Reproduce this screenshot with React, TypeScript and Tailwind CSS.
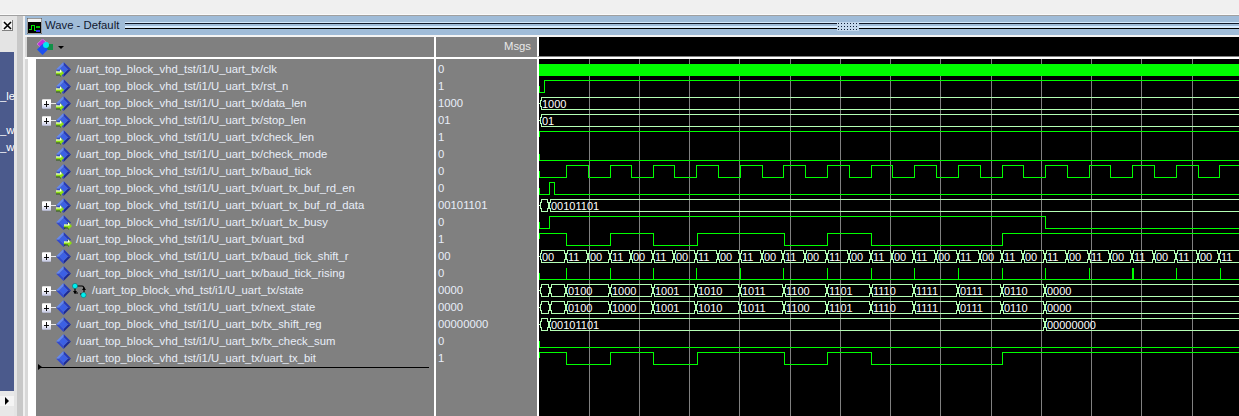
const EDGES = [566, 588, 610, 631, 653, 674, 696, 718, 740, 762, 783, 805, 827, 849, 871, 892, 914, 936, 958, 980, 1002, 1023, 1045, 1067, 1089, 1110, 1132, 1154, 1176, 1198, 1219];
const GRID = [589, 639, 689, 739, 790, 840, 890, 940, 991, 1041, 1091, 1141, 1192];
const RISING = [566, 610, 653, 696, 740, 783, 827, 871, 914, 958, 1002, 1045, 1089, 1132, 1176, 1220];
const STATE_X = [540, 550, 566, 610, 653, 696, 740, 784, 827, 871, 914, 958, 1002, 1045, 1242];
const STATE_LABELS = ["", "", "0100", "1000", "1001", "1010", "1011", "1100", "1101", "1110", "1111", "0111", "0110", "0000"];
const SHIFT_X = [540, ...EDGES, 1242];
const SHIFT_LABELS = SHIFT_X.slice(0, -1).map((_, i) => (i % 2 === 0 ? "00" : "11"));
const TX_EDGES = [566, 610, 653, 697, 784, 827, 871, 1002];

type Sig = { name: string; value: string; plus?: boolean; arrow?: "left" | "right"; fsm?: boolean };

const PREFIX = "/uart_top_block_vhd_tst/i1/U_uart_tx/";
const SIGNALS: Sig[] = [
  { name: "clk", value: "0", arrow: "left" },
  { name: "rst_n", value: "1", arrow: "left" },
  { name: "data_len", value: "1000", arrow: "left", plus: true },
  { name: "stop_len", value: "01", arrow: "left", plus: true },
  { name: "check_len", value: "1", arrow: "left" },
  { name: "check_mode", value: "0", arrow: "left" },
  { name: "baud_tick", value: "0", arrow: "left" },
  { name: "uart_tx_buf_rd_en", value: "0", arrow: "left" },
  { name: "uart_tx_buf_rd_data", value: "00101101", arrow: "left", plus: true },
  { name: "uart_tx_busy", value: "0", arrow: "right" },
  { name: "uart_txd", value: "1", arrow: "right" },
  { name: "baud_tick_shift_r", value: "00", plus: true },
  { name: "baud_tick_rising", value: "0" },
  { name: "state", value: "0000", plus: true, fsm: true },
  { name: "next_state", value: "0000", plus: true },
  { name: "tx_shift_reg", value: "00000000", plus: true },
  { name: "tx_check_sum", value: "0" },
  { name: "uart_tx_bit", value: "1" },
];

const hi = (row: number) => 62 + 17 * row + 1;
const lo = (row: number) => 62 + 17 * row + 13;

// single bit trace: half height tick at time 0, then toggles on each edge
function bit(row: number, startHigh: boolean, edges: number[]) {
  let high = startHigh;
  const mid = (hi(row) + lo(row)) / 2;
  let d = `M539.5 ${mid}V${(high ? hi(row) : lo(row)) + 0.5}`;
  for (const x of edges) {
    d += `H${x + 0.5}`;
    high = !high;
    d += `V${(high ? hi(row) : lo(row)) + 0.5}`;
  }
  return d + "H1240";
}

function BusRow({ row, xs, labels }: { row: number; xs: number[]; labels: string[] }) {
  const t = hi(row) + 0.5;
  const b = lo(row) + 0.5;
  const m = (t + b) / 2;
  return (
    <g>
      {labels.map((label, i) => {
        const x0 = xs[i];
        const x1 = xs[i + 1];
        return (
          <g key={i}>
            <path
              d={`M${x0 + 2} ${t}L${x1 - 2} ${t}L${x1} ${m}L${x1 - 2} ${b}L${x0 + 2} ${b}L${x0} ${m}Z`}
              fill="none"
              stroke="#b4ffb4"
            />
            {label && (
              <text x={x0 + 2} y={62 + 17 * row + 12} fill="#ffffff" fontSize="11">
                {label}
              </text>
            )}
          </g>
        );
      })}
    </g>
  );
}

function WaveCanvas() {
  return (
    <svg width="700" height="357" viewBox="539 59 700 357" className="block" style={{ fontFamily: "'Liberation Sans', sans-serif" }}>
      {GRID.map((x) => (
        <rect key={x} x={x} y={59} width={1} height={357} fill="#808080" />
      ))}
      <rect x={539} y={64} width={701} height={12} fill="#00ff00" />
      <g fill="none" stroke="#00ff00" shapeRendering="crispEdges">
        <path d={bit(1, false, [544])} />
        <path d={bit(4, true, [])} />
        <path d={bit(5, false, [])} />
        <path d={bit(6, false, EDGES)} />
        <path d={bit(7, false, [549, 554])} />
        <path d={bit(9, false, [549, 1045])} />
        <path d={bit(10, true, TX_EDGES)} />
        <path d={bit(12, false, [])} />
        {RISING.map((x) => (
          <path key={x} d={`M${x + 0.5} 268V279`} strokeWidth={x === 1132 ? 2 : 1} />
        ))}
        <path d={bit(16, false, [])} />
        <path d={bit(17, true, TX_EDGES)} />
      </g>
      <g shapeRendering="crispEdges">
        <BusRow row={2} xs={[540, 1242]} labels={["1000"]} />
        <BusRow row={3} xs={[540, 1242]} labels={["01"]} />
        <BusRow row={8} xs={[540, 549, 1242]} labels={["", "00101101"]} />
        <BusRow row={11} xs={SHIFT_X} labels={SHIFT_LABELS} />
        <BusRow row={13} xs={STATE_X} labels={STATE_LABELS} />
        <BusRow row={14} xs={STATE_X} labels={STATE_LABELS} />
        <BusRow row={15} xs={[540, 549, 1045, 1242]} labels={["", "00101101", "00000000"]} />
      </g>
    </svg>
  );
}

function Diamond() {
  return (
    <svg width="15" height="15" viewBox="0 0 15 15" className="block">
      <polygon points="7.5,0 15,7.5 12,7.5 7.5,3" fill="#2438b8" />
      <polygon points="15,7.5 7.5,15 7.5,12 12,7.5" fill="#1a2894" />
      <polygon points="7.5,15 0,7.5 3,7.5 7.5,12" fill="#3048d0" />
      <polygon points="0,7.5 7.5,0 7.5,3 3,7.5" fill="#6488f0" />
      <polygon points="7.5,3 12,7.5 7.5,12 3,7.5" fill="#3c60e4" />
    </svg>
  );
}

function PortArrow({ side }: { side: "left" | "right" }) {
  return (
    <svg
      width="8"
      height="8"
      viewBox="0 0 8 8"
      className={side === "left" ? "absolute left-0 top-[7px]" : "absolute left-[8px] top-[7px]"}
    >
      <path d="M0 2.5H4V0L8 4L4 8V5.5H0Z" fill="#8ee010" />
      <path d="M0 2.5H4V0.5L5.5 2V3.5H0Z" fill="#ffffff" />
      <path d="M0 5.5H4V8L5 7V6.5H0Z" fill="#2c5a10" />
    </svg>
  );
}

function PlusBox() {
  return (
    <div className="flex items-center">
      <svg width="10" height="10" viewBox="0 0 10 10" className="block">
        <defs>
          <linearGradient id="plusFill" x1="0" y1="0" x2="0" y2="1">
            <stop offset="0.4" stopColor="#ffffff" />
            <stop offset="1" stopColor="#c4c8e4" />
          </linearGradient>
        </defs>
        <rect width="10" height="10" rx="1" fill="url(#plusFill)" />
        <path d="M2 5H8M5 2V8" stroke="#000000" fill="none" shapeRendering="crispEdges" />
      </svg>
      <div className="w-[5px] h-px bg-[#e8e8e8]" />
    </div>
  );
}

function FsmIcon() {
  return (
    <svg width="17" height="17" viewBox="0 0 17 17" className="block">
      <path d="M4 5V11L7 11M4 4H11Q13 4 13 7V10M9 12H13" fill="none" stroke="#000000" strokeWidth="1.2" />
      <path d="M2 9L4 12L6 9ZM11 8L13 5L15 8Z" fill="#000000" />
      <circle cx="4" cy="4" r="2.6" fill="#00f0f0" stroke="#006060" strokeWidth="0.5" />
      <circle cx="12.5" cy="13" r="2.6" fill="#00f0f0" stroke="#006060" strokeWidth="0.5" />
    </svg>
  );
}

function TitleIcon() {
  return (
    <svg width="15" height="16" viewBox="0 0 15 16" className="block">
      <rect width="15" height="16" fill="#f0f0f0" stroke="#404040" />
      <rect x="1" y="4" width="13" height="11" fill="#000000" />
      <path d="M2 11H4V7H7V12H9" fill="none" stroke="#00e000" shapeRendering="crispEdges" />
      <rect x="9" y="8" width="4" height="2" fill="#00c000" />
      <rect x="9" y="12" width="4" height="2" fill="#3030e0" />
    </svg>
  );
}

function ToolbarIcon() {
  return (
    <svg width="16" height="16" viewBox="0 0 16 16" className="block">
      <polygon points="5.5,0 11,4.5 5.5,10 0,5" fill="#c030d8" stroke="#e8b0f0" strokeWidth="0.5" />
      <rect x="9" y="5" width="7" height="6" fill="#109048" />
      <polygon points="5.5,5 11,10.5 5.5,16 0,10.5" fill="#1c50f0" />
      <circle cx="9" cy="6" r="3" fill="#00e8f0" />
    </svg>
  );
}

function SignalRow({ sig }: { sig: Sig }) {
  return (
    <div className="flex items-center h-[17px] whitespace-nowrap">
      <div className="w-[20px] pl-[6px] shrink-0">{sig.plus && <PlusBox />}</div>
      <div className="relative w-[15px] h-[15px] shrink-0">
        <Diamond />
        {sig.arrow && <PortArrow side={sig.arrow} />}
      </div>
      {sig.fsm && (
        <div className="w-[16px] shrink-0">
          <FsmIcon />
        </div>
      )}
      <span className="ml-[5px]">
        {PREFIX}
        {sig.name}
      </span>
    </div>
  );
}

export default function App() {
  return (
    <div className="w-[1239px] h-[416px] overflow-hidden flex flex-col bg-[#f0f0f0] font-['Liberation_Sans',sans-serif] text-[11.3px] leading-none">
      <div className="h-[15px] shrink-0 bg-[#f0f0f0] border-b border-[#fafafa]" />
      <div className="flex flex-1 min-h-0 border-t border-[#a0a0a0]">
        {/* docked panel cut off at the left edge */}
        <div className="w-[14px] shrink-0 flex flex-col bg-[#e4e4e4]">
          <div className="h-[36px] shrink-0 pt-[4px] pl-[2px]">
            <div className="w-[11px] h-[11px] flex items-center justify-center bg-[#f4f4f4] border-r border-b border-[#808080]">
              <svg width="9" height="9" viewBox="0 0 9 9">
                <path d="M1 1L8 8M8 1L1 8" stroke="#000000" strokeWidth="1.6" />
              </svg>
            </div>
          </div>
          <div className="flex-1 bg-[#4b5a8c] overflow-hidden text-[#ffffff] whitespace-nowrap">
            <div className="h-[12px] mt-[39px]">_le</div>
            <div className="h-[12px] mt-[22px]">_wr</div>
            <div className="h-[12px] mt-[5px]">_wr</div>
          </div>
          <div className="h-[25px] shrink-0 pt-[5px] bg-[#e8e8e8]">
            <div className="h-[10px] flex items-center justify-center bg-[#f4f4f4]">
              <div className="w-0 h-0 border-y-[4px] border-y-transparent border-l-[4px] border-l-black" />
            </div>
          </div>
        </div>
        <div className="w-[11px] shrink-0 flex bg-[#d4d4d4]">
          <div className="w-[3px] bg-[#e4e4e4]" />
          <div className="w-[6px] bg-[#c8c8c8]" />
          <div className="w-[2px] bg-[#f0f0f0]" />
        </div>

        {/* wave window */}
        <div className="flex-1 min-w-0 flex flex-col bg-[#d8d8d8]">
          <div className="relative h-[19px] shrink-0 flex items-center bg-[#a0bcd8] text-[#101830] text-[11.3px]">
            <div className="ml-[2px] w-[15px]">
              <TitleIcon />
            </div>
            <span className="ml-[3px] w-[80px]">Wave - Default</span>
            <div className="flex-1 flex flex-col">
              <div className="h-px bg-[#d8ecff]" />
              <div className="h-px bg-[#101828]" />
              <div className="h-[2px]" />
              <div className="h-[2px] bg-[#d8ecff]" />
              <div className="h-px bg-[#000000]" />
            </div>
            <div className="absolute left-[812px] top-[6px] w-[22px] h-[9px] bg-[#c4d8ec] bg-[radial-gradient(#10203a_1px,transparent_1px)] bg-[length:3px_3px]" />
          </div>
          <div className="h-[2px] shrink-0 bg-[#f4f4f4]" />

          {/* header strip */}
          <div className="h-[20px] shrink-0 flex pl-[2px]">
            <div className="w-[407px] flex items-center bg-[#808080] pl-[10px]">
              <ToolbarIcon />
              <div className="ml-[5px] w-0 h-0 border-x-[3px] border-x-transparent border-t-[3px] border-t-black" />
            </div>
            <div className="w-[103px] border-l-2 border-white bg-[#808080] flex items-center justify-end pr-[6px] text-[#e8e8e8]">
              Msgs
            </div>
            <div className="flex-1 border-l-2 border-white bg-black border-b border-b-[#808080]" />
          </div>

          {/* panes */}
          <div className="flex flex-1 min-h-0 border-t-2 border-white pl-[3px]">
            <div className="w-[8px] shrink-0 bg-white" />
            <div className="w-[398px] shrink-0 bg-[#808080] pt-[2px] text-[#e8eef8] flex flex-col">
              {SIGNALS.map((s) => (
                <SignalRow key={s.name} sig={s} />
              ))}
              <div className="relative ml-[4px] w-[389px] h-px bg-black">
                <div className="absolute left-[-2px] top-[-3px] w-0 h-0 border-y-[3px] border-y-transparent border-l-[4px] border-l-black" />
              </div>
            </div>
            <div className="w-[103px] shrink-0 border-l-2 border-white bg-[#808080] pt-[2px] pl-[2px] text-[#e8eef8]">
              {SIGNALS.map((s) => (
                <div key={s.name} className="h-[17px] flex items-center">
                  {s.value}
                </div>
              ))}
            </div>
            <div className="flex-1 min-w-0 border-l-2 border-white bg-black">
              <WaveCanvas />
            </div>
          </div>
        </div>
      </div>
    </div>
  );
}
